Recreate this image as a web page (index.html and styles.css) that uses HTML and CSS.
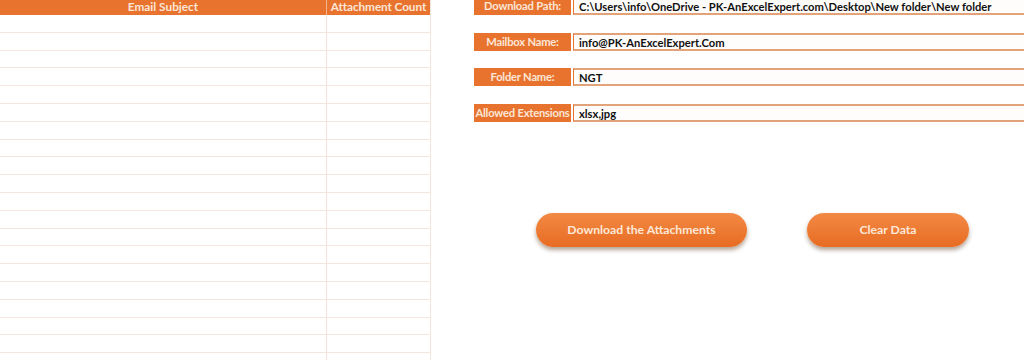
FILE: index.html
```html
<!DOCTYPE html>
<html>
<head>
<meta charset="utf-8">
<link rel="stylesheet" href="styles.css">
</head>
<body>
<div class="page">
  <div class="table">
    <div class="thead">
      <div class="th subj">Email Subject</div>
      <div class="th cnt">Attachment Count</div>
    </div>
    <div class="tbody">
      <div class="row"><div class="c subj"></div><div class="c cnt"></div></div>
      <div class="row"><div class="c subj"></div><div class="c cnt"></div></div>
      <div class="row"><div class="c subj"></div><div class="c cnt"></div></div>
      <div class="row"><div class="c subj"></div><div class="c cnt"></div></div>
      <div class="row"><div class="c subj"></div><div class="c cnt"></div></div>
      <div class="row"><div class="c subj"></div><div class="c cnt"></div></div>
      <div class="row"><div class="c subj"></div><div class="c cnt"></div></div>
      <div class="row"><div class="c subj"></div><div class="c cnt"></div></div>
      <div class="row"><div class="c subj"></div><div class="c cnt"></div></div>
      <div class="row"><div class="c subj"></div><div class="c cnt"></div></div>
      <div class="row"><div class="c subj"></div><div class="c cnt"></div></div>
      <div class="row"><div class="c subj"></div><div class="c cnt"></div></div>
      <div class="row"><div class="c subj"></div><div class="c cnt"></div></div>
      <div class="row"><div class="c subj"></div><div class="c cnt"></div></div>
      <div class="row"><div class="c subj"></div><div class="c cnt"></div></div>
      <div class="row"><div class="c subj"></div><div class="c cnt"></div></div>
      <div class="row"><div class="c subj"></div><div class="c cnt"></div></div>
      <div class="row"><div class="c subj"></div><div class="c cnt"></div></div>
      <div class="row"><div class="c subj"></div><div class="c cnt"></div></div>
      <div class="row"><div class="c subj"></div><div class="c cnt"></div></div>
    </div>
  </div>
  <div class="panel">
    <div class="fields">
      <div class="field">
        <div class="label">Download Path:</div>
        <div class="value">C:\Users\info\OneDrive - PK-AnExcelExpert.com\Desktop\New folder\New folder</div>
      </div>
      <div class="field">
        <div class="label">Mailbox Name:</div>
        <div class="value">info@PK-AnExcelExpert.Com</div>
      </div>
      <div class="field">
        <div class="label">Folder Name:</div>
        <div class="value">NGT</div>
      </div>
      <div class="field">
        <div class="label">Allowed Extensions</div>
        <div class="value">xlsx,jpg</div>
      </div>
    </div>
    <div class="actions">
      <button class="btn btn-download">Download the Attachments</button>
      <button class="btn btn-clear">Clear Data</button>
    </div>
  </div>
</div>
</body>
</html>
```
FILE: styles.css
```css
* { box-sizing: border-box; }
html, body {
  margin: 0;
  padding: 0;
  background: #ffffff;
  width: 1024px;
  height: 360px;
  overflow: hidden;
  font-family: Lato, "Open Sans", "Liberation Sans", sans-serif;
}
.page {
  display: flex;
  height: 360px;
}
.table {
  width: 431px;
  flex: none;
  border-right: 1px solid #f6e4dc;
}
.thead {
  display: flex;
  height: 15px;
  background: #e8732f;
}
.th {
  color: #fce6d6;
  font-weight: 700;
  font-size: 11.8px;
  line-height: 14px;
  text-align: center;
}
.subj { width: 326px; flex: none; }
.cnt { flex: 1; }
.th.cnt { border-left: 1px solid #f3b48e; letter-spacing: -0.1px; }
.row {
  display: flex;
  height: 17.8px;
  border-bottom: 1px solid #f4e6df;
}
.c.cnt { border-left: 1px solid #f6e2da; }
.panel {
  flex: 1;
  padding-left: 43px;
  display: flex;
  flex-direction: column;
  margin-top: -3px;
}
.fields {
  display: flex;
  flex-direction: column;
  gap: 17.5px;
}
.field {
  display: flex;
  height: 18px;
}
.label {
  width: 97px;
  flex: none;
  background: #e8732f;
  color: #fce6d6;
  font-weight: 700;
  font-size: 11.2px;
  line-height: 18px;
  text-align: center;
  white-space: nowrap;
  letter-spacing: -0.2px;
}
.value {
  flex: 1;
  margin-left: 2px;
  background: #fffdfb;
  border-top: 2px solid #e2a37a;
  border-bottom: 2px solid #e2a37a;
  border-left: 1px solid #e8732f;
  padding-left: 5px;
  color: #111111;
  font-weight: 700;
  font-size: 11.2px;
  line-height: 15px;
  white-space: nowrap;
}
.actions {
  display: flex;
  gap: 60px;
  margin-top: 91px;
  padding-left: 62px;
}
.btn {
  height: 34px;
  border: none;
  border-radius: 17px;
  background: linear-gradient(#f28a45, #e86b22);
  color: #fde8d8;
  font-family: Lato, "Open Sans", "Liberation Sans", sans-serif;
  font-weight: 700;
  font-size: 12.2px;
  box-shadow: 0 3px 4px rgba(90, 50, 20, 0.45);
  padding: 0;
}
.btn-download { width: 211px; }
.btn-clear { width: 162px; }
```
